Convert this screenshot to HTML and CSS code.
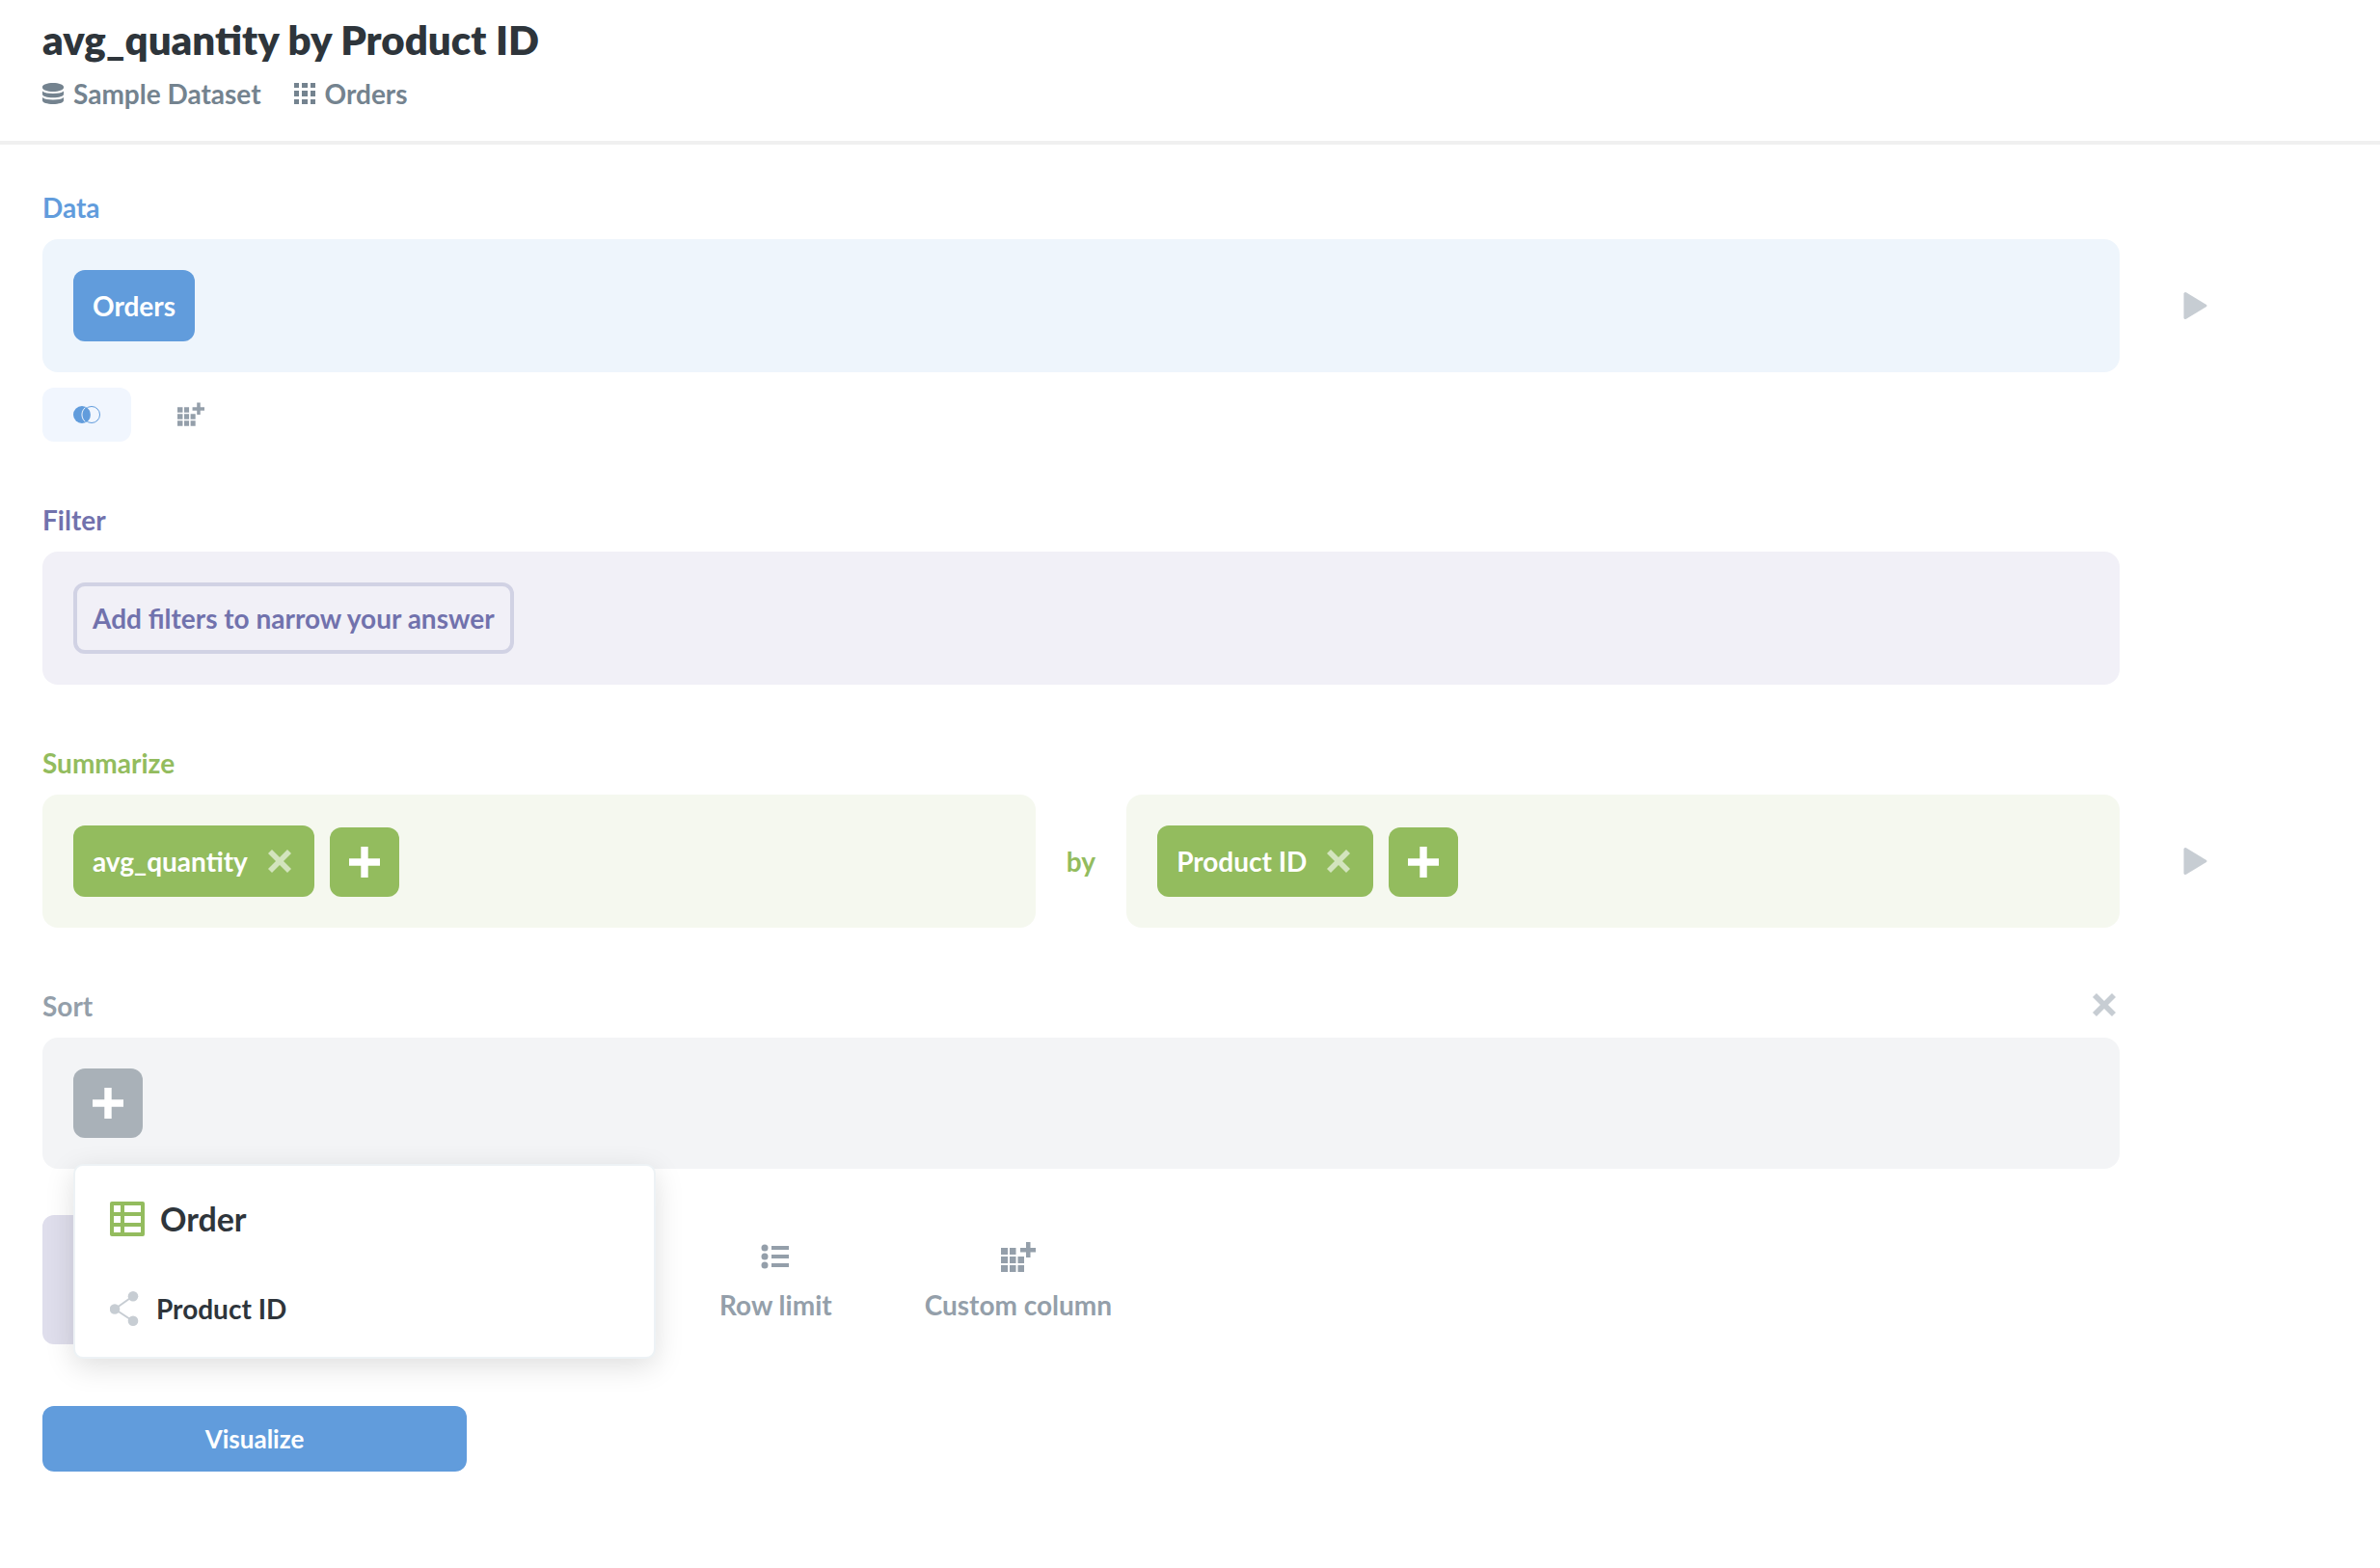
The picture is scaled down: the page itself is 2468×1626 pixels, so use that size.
FILE: index.html
```html
<!DOCTYPE html>
<html lang="en">
<head>
    <meta charset="UTF-8">
    <meta name="viewport" content="width=device-width, initial-scale=1.0">
    <title>avg_quantity by Product ID</title>
    <link rel="stylesheet" href="styles.css">
</head>
<body>
    <!-- Shared icons -->
    <svg class="sprite" aria-hidden="true">
        <symbol id="icon-close" viewBox="0 0 32 32">
            <path d="M4 8l4-4 8 8 8-8 4 4-8 8 8 8-4 4-8-8-8 8-4-4 8-8z"/>
        </symbol>
        <symbol id="icon-add" viewBox="0 0 32 32">
            <path d="M12.3 0h7.4v12.3H32v7.4H19.7V32h-7.4V19.7H0v-7.4h12.3z"/>
        </symbol>
        <symbol id="icon-play" viewBox="0 0 24 28">
            <path d="M0 1.5Q0 0 1.8 0L2.5.3 23.5 13q1 1 0 2L2.5 27.7 1.8 28Q0 28 0 26.5z"/>
        </symbol>
        <symbol id="icon-column" viewBox="0 0 36 32">
            <path d="M0 6h7v7H0zM9 6h6.5v7H9zM0 15h7v7H0zM9 15h6.5v7H9zM17.5 15H24v7h-6.5zM0 24h7v7H0zM9 24h6.5v7H9zM17.5 24H24v7h-6.5zM26 0h4.5v6H36v4.5h-5.5V16H26v-5.5h-6V6h6z"/>
        </symbol>
    </svg>

    <header class="header">
        <h1 class="title">avg_quantity by Product ID</h1>
        <nav class="crumbs">
            <a class="crumb" href="#">
                <svg class="crumb-icon" viewBox="0 0 22 22"><path d="M11 0c6 0 11 1.8 11 4v1c0 2.2-5 4-11 4S0 7.2 0 5V4c0-2.2 5-4 11-4zM0 8.5C2 10.3 6 11 11 11s9-.7 11-2.5v3.3c0 2-5 3.5-11 3.5S0 13.8 0 11.8zM0 15c2 1.8 6 2.5 11 2.5s9-.7 11-2.5v3.3c0 2.2-5 3.7-11 3.7S0 20.5 0 18.3z"/></svg>
                Sample Dataset
            </a>
            <a class="crumb" href="#">
                <svg class="crumb-icon" viewBox="0 0 22 22"><path d="M0 0h5v5H0zM8 0h6v5H8zM17 0h5v5h-5zM0 8h5v6H0zM8 8h6v6H8zM17 8h5v6h-5zM0 17h5v5H0zM8 17h6v5H8zM17 17h5v5h-5z"/></svg>
                Orders
            </a>
        </nav>
    </header>

    <main class="notebook">
        <section class="step blue">
            <h2 class="step-title">Data</h2>
            <div class="step-row">
                <div class="cell">
                    <button class="chip">Orders</button>
                </div>
                <button class="preview" aria-label="Preview"><svg class="play-icon"><use href="#icon-play"/></svg></button>
            </div>
            <div class="step-actions">
                <button class="small-action active" aria-label="Join data">
                    <svg class="small-icon" viewBox="0 0 28 18">
                        <circle cx="9" cy="9" r="9" fill="#619cdc"/>
                        <circle cx="19" cy="9" r="9.5" fill="#f1f6fe"/>
                        <path d="M12.8.9a9 9 0 0 1 0 16.2A9.5 9.5 0 0 1 12.8.9z" fill="#619cdc"/>
                        <circle cx="19" cy="9" r="8.5" fill="none" stroke="#619cdc"/>
                        <path d="M12.5 1.6a9.5 9.5 0 0 0 0 14.8" fill="none" stroke="#f1f6fe"/>
                    </svg>
                </button>
                <button class="small-action" aria-label="Custom column"><svg class="small-icon"><use href="#icon-column"/></svg></button>
            </div>
        </section>

        <section class="step purple">
            <h2 class="step-title">Filter</h2>
            <div class="step-row">
                <div class="cell">
                    <button class="chip outline">Add filters to narrow your answer</button>
                </div>
            </div>
        </section>

        <section class="step green">
            <h2 class="step-title">Summarize</h2>
            <div class="step-row">
                <div class="split">
                    <div class="cell">
                        <button class="chip">avg_quantity <svg class="icon faded"><use href="#icon-close"/></svg></button>
                        <button class="add" aria-label="Add metric"><svg class="icon"><use href="#icon-add"/></svg></button>
                    </div>
                    <span class="by">by</span>
                    <div class="cell">
                        <button class="chip">Product ID <svg class="icon faded"><use href="#icon-close"/></svg></button>
                        <button class="add" aria-label="Add grouping"><svg class="icon"><use href="#icon-add"/></svg></button>
                    </div>
                </div>
                <button class="preview" aria-label="Preview"><svg class="play-icon"><use href="#icon-play"/></svg></button>
            </div>
        </section>

        <section class="step gray">
            <div class="step-row">
                <div class="step-head">
                    <h2 class="step-title">Sort</h2>
                    <button class="remove" aria-label="Remove sort"><svg class="icon"><use href="#icon-close"/></svg></button>
                </div>
                <div class="cell">
                    <div class="picker">
                        <button class="add" aria-label="Add sort"><svg class="icon"><use href="#icon-add"/></svg></button>
                        <div class="popover">
                            <h3 class="popover-title">
                                <svg class="popover-icon table-icon" viewBox="0 0 36 36"><path d="M2 2h32v32H2zM2 13h32M2 24h32M13 2v32"/></svg>
                                Order
                            </h3>
                            <button class="popover-item">
                                <svg class="share-icon" viewBox="0 0 30 36"><path d="M5 18.5L24 5M5 18.5L24 31"/><circle cx="5" cy="18.5" r="5.3"/><circle cx="24" cy="5.3" r="5.3"/><circle cx="24" cy="30.7" r="5.3"/></svg>
                                Product ID
                            </button>
                        </div>
                    </div>
                </div>
            </div>
        </section>

        <div class="actions">
            <button class="action filter" aria-label="Filter"></button>
            <button class="action summarize" aria-label="Summarize"></button>
            <button class="action">
                <svg class="action-icon" viewBox="0 0 36 32"><circle cx="7" cy="6" r="3.5"/><circle cx="7" cy="15" r="3.5"/><circle cx="7" cy="24" r="3.5"/><path d="M14 4h18v4H14zM14 13h18v4H14zM14 22h18v4H14z"/></svg>
                Row limit
            </button>
            <button class="action">
                <svg class="action-icon"><use href="#icon-column"/></svg>
                Custom column
            </button>
        </div>

        <button class="visualize">Visualize</button>
    </main>
</body>
</html>
```
FILE: styles.css
```css
* {
    box-sizing: border-box;
}
body {
    margin: 0;
    background-color: #fff;
    color: #2e353b;
    font-family: Lato, sans-serif;
    font-size: 28px;
    font-weight: 700;
    line-height: 34px;
}
h1, h2, h3 {
    margin: 0;
}
button {
    border: none;
    padding: 0;
    background: none;
    color: inherit;
    font: inherit;
    cursor: pointer;
}
svg {
    display: block;
    flex: none;
    fill: currentColor;
}
.sprite {
    position: absolute;
    width: 0;
    height: 0;
}
.icon {
    width: 32px;
    height: 32px;
}
.faded {
    opacity: 0.6;
}

/* Header */
.header {
    padding: 16px 44px 32px;
    border-bottom: 4px solid #f0f0f0;
}
.title {
    margin-bottom: 14px;
    font-size: 42px;
    font-weight: 800;
    line-height: 50px;
}
.crumbs {
    display: flex;
    gap: 34px;
}
.crumb {
    display: flex;
    align-items: center;
    gap: 10px;
    color: #74838f;
    text-decoration: none;
}
.crumb-icon {
    width: 22px;
    height: 22px;
}

/* Steps */
.notebook {
    padding: 48px 44px;
}
.step {
    margin-bottom: 64px;
}
.step-title {
    margin-bottom: 16px;
    color: var(--main);
    font-size: 28px;
}
.step-row {
    display: grid;
    grid-template-columns: 1fr 226px;
    align-items: center;
}
.step-head {
    display: flex;
    justify-content: space-between;
    grid-column: 1 / 2;
}
.step-head + .cell {
    grid-column: 1 / 2;
}
.cell {
    display: flex;
    align-items: flex-end;
    gap: 16px;
    padding: 32px;
    border-radius: 16px;
    background-color: var(--light);
}
.blue {
    --main: #619cdc;
    --light: #eef5fc;
}
.purple {
    --main: #7172ad;
    --light: #f1f0f7;
}
.green {
    --main: #93bc5e;
    --light: #f5f8ef;
}
.gray {
    --main: #949faa;
    --light: #f3f4f6;
    margin-bottom: 48px;
}
.chip {
    display: flex;
    align-items: center;
    gap: 17px;
    padding: 20px;
    border-radius: 12px;
    background-color: var(--main);
    color: #fff;
}
.outline {
    padding: 16px;
    border: 4px solid #d1d2e4;
    background-color: transparent;
    color: var(--main);
}
.add {
    padding: 20px;
    border-radius: 12px;
    background-color: var(--main);
    color: #fff;
}
.gray .add {
    background-color: #a9b1b8;
}
.split {
    display: grid;
    grid-template-columns: 1fr auto 1fr;
    align-items: center;
    gap: 32px;
}
.by {
    color: var(--main);
}
.preview {
    justify-self: start;
    margin-left: 66px;
    color: #c7cdd3;
}
.play-icon {
    width: 25px;
    height: 28px;
}
.remove {
    height: 32px;
    color: #c7cdd3;
}
.step-actions {
    display: flex;
    gap: 16px;
    margin-top: 16px;
}
.small-action {
    display: flex;
    align-items: center;
    height: 56px;
    padding: 0 32px;
    border-radius: 12px;
    color: #949faa;
}
.active {
    background-color: #f1f6fe;
}
.small-icon {
    width: 28px;
    height: 26px;
}

/* Sort menu, opens over the content below */
.picker {
    position: relative;
}
.popover {
    position: absolute;
    z-index: 1;
    top: 99px;
    left: 0;
    width: 604px;
    padding: 36px 36px 32px;
    border: 2px solid #edf2f5;
    border-radius: 10px;
    background-color: #fff;
    box-shadow: 0 8px 30px rgba(0, 0, 0, 0.13);
}
.popover-title {
    display: flex;
    align-items: center;
    gap: 16px;
    height: 38px;
    margin-bottom: 56px;
    font-size: 34px;
}
.popover-item {
    display: flex;
    align-items: center;
    gap: 18px;
    height: 36px;
}
.popover-icon {
    width: 36px;
    height: 36px;
}
.table-icon {
    fill: none;
    stroke: #93bc5e;
    stroke-width: 4;
    stroke-linejoin: round;
}
.share-icon {
    width: 30px;
    height: 36px;
    fill: #c7cdd3;
    stroke: #c7cdd3;
    stroke-width: 2;
}
.share-icon circle {
    stroke: none;
}

/* Actions */
.actions {
    display: flex;
    gap: 16px;
    margin-bottom: 64px;
}
.action {
    display: flex;
    flex-direction: column;
    align-items: center;
    gap: 16px;
    height: 134px;
    padding: 28px 40px 24px;
    border-radius: 12px;
    color: #949faa;
}
.filter {
    width: 300px;
    background-color: #dfdeec;
}
.summarize {
    width: 330px;
}
.action-icon {
    width: 36px;
    height: 32px;
}
.visualize {
    width: 440px;
    height: 68px;
    border-radius: 12px;
    background-color: #619cdc;
    color: #fff;
    font-size: 26px;
}
```
